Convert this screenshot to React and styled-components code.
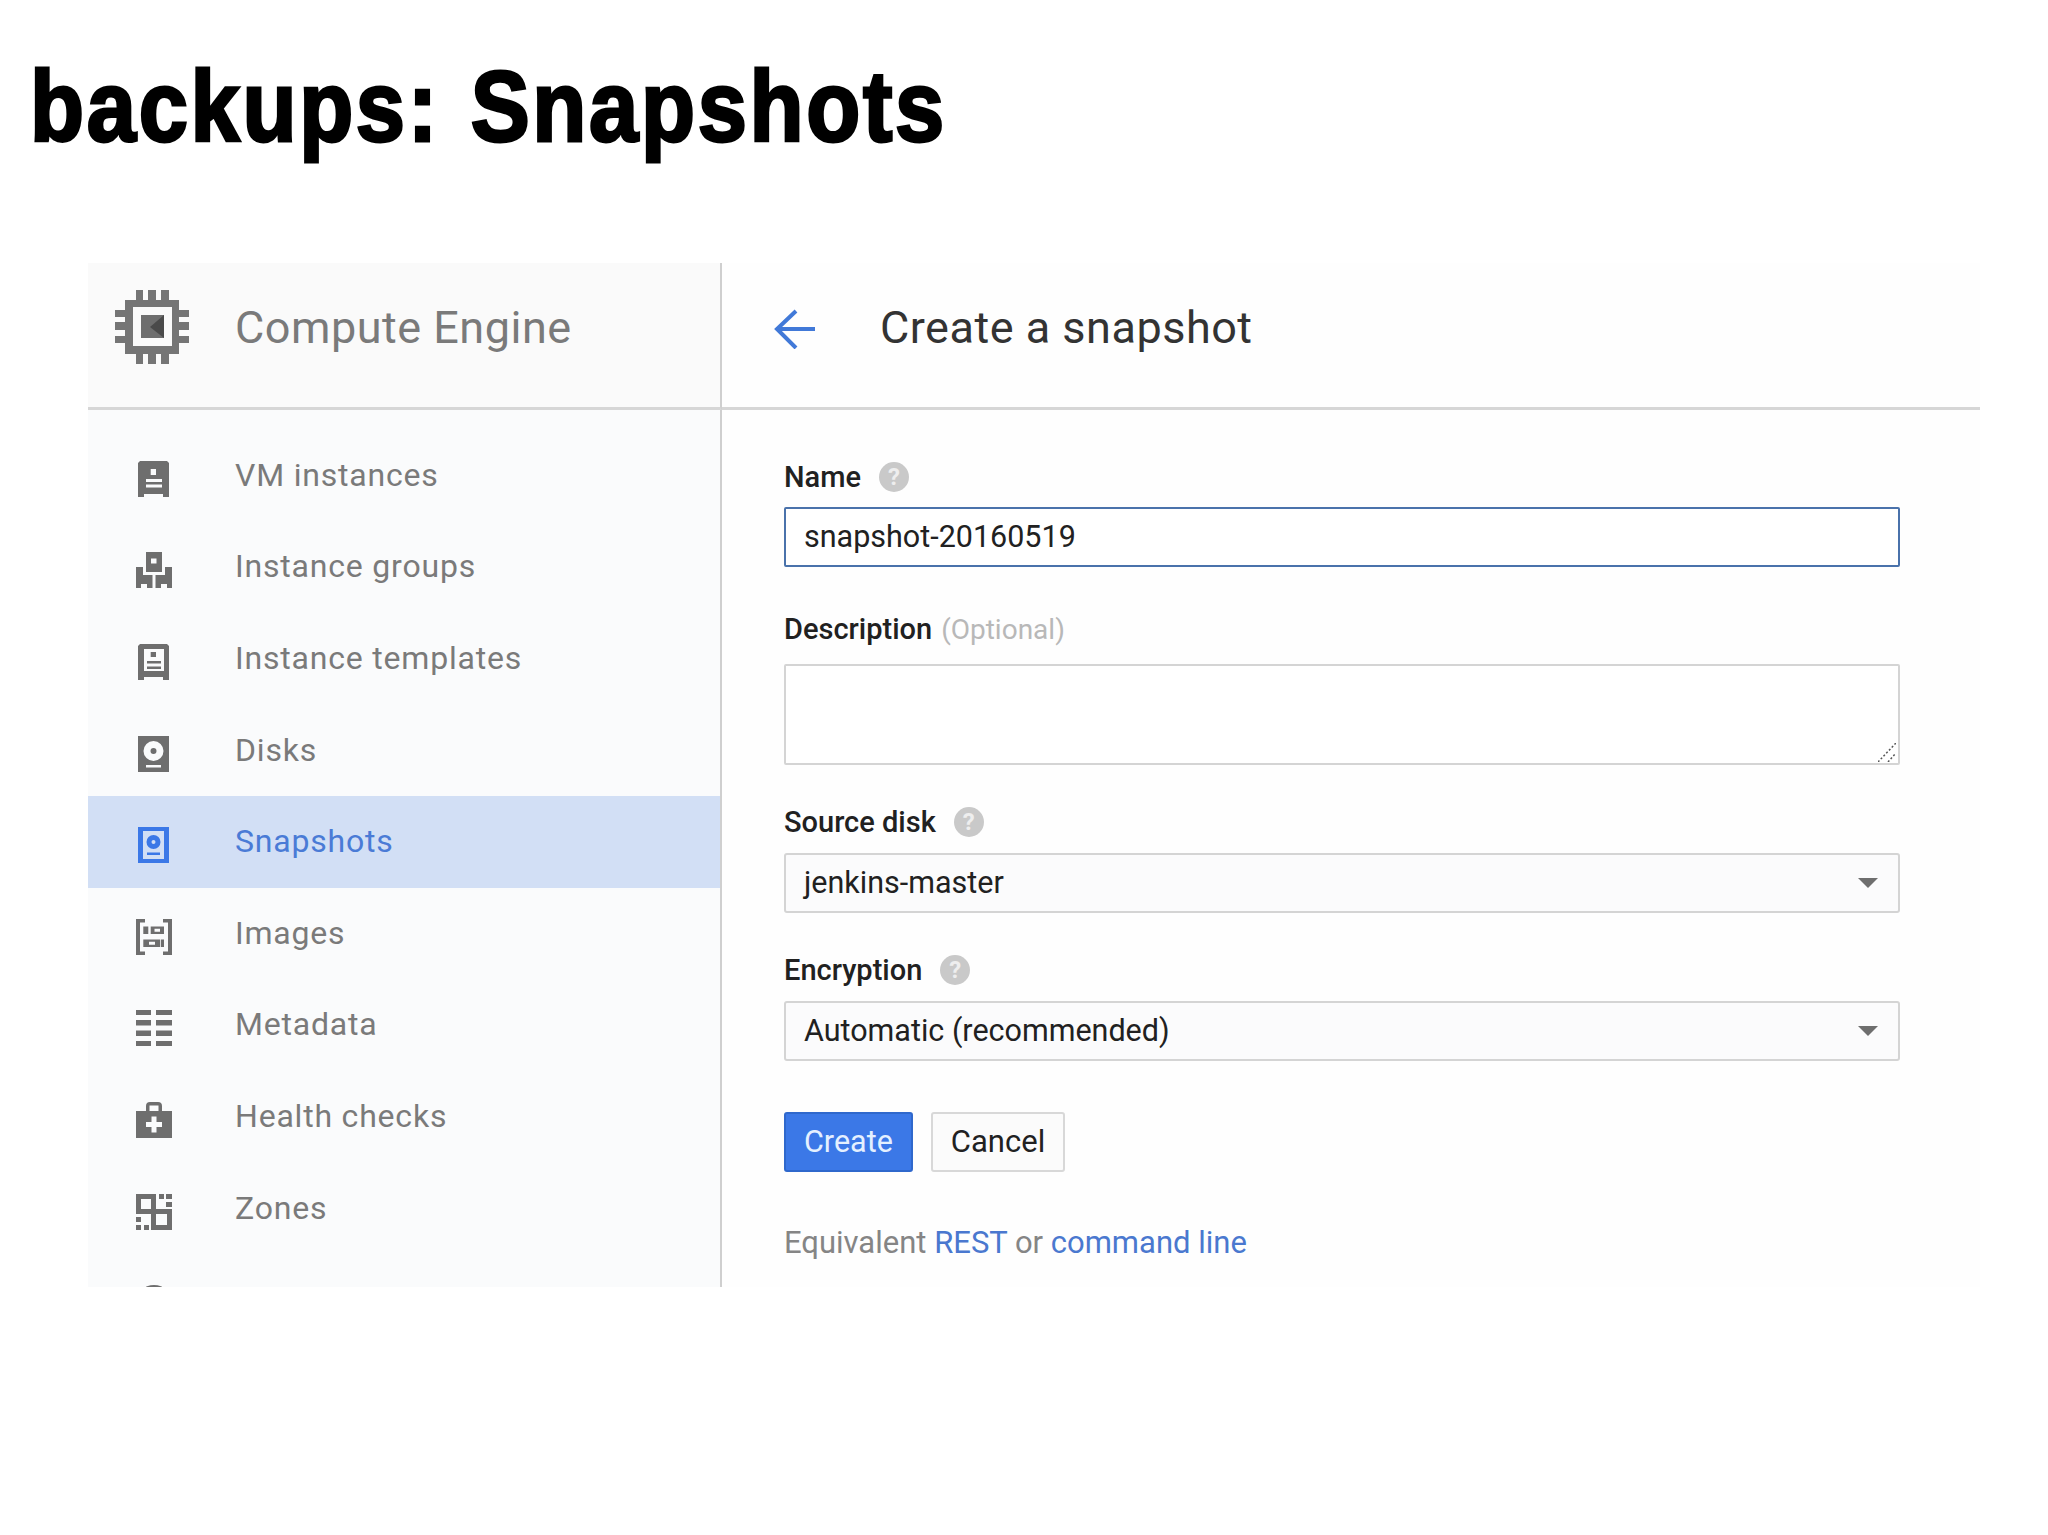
import React from "react";
import styled, { createGlobalStyle } from "styled-components";

const GlobalStyle = createGlobalStyle`
  html, body {
    margin: 0;
    background: #fff;
    font-family: Roboto, "Liberation Sans", sans-serif;
  }
`;

const Page = styled.div`
  width: 2048px;
  height: 1535px;
  overflow: hidden;
`;

const SlideTitle = styled.h1`
  margin: 0;
  height: 263px;
  padding: 46px 0 0 34px;
  box-sizing: border-box;
  font-family: "Liberation Sans", sans-serif;
  font-size: 100px;
  font-weight: 700;
  line-height: 120px;
  letter-spacing: 3px;
  word-spacing: 4px;
  color: #000;
  -webkit-text-stroke: 3px #000;
  transform: scaleX(0.885);
  transform-origin: left top;
  white-space: nowrap;
`;

const Panel = styled.div`
  display: grid;
  grid-template-columns: 634px 1fr;
  grid-template-rows: 147px 1fr;
  width: 1892px;
  height: 1024px;
  margin-left: 88px;
  overflow: hidden;
  background: #fefefe;
`;

const BrandBar = styled.div`
  display: flex;
  align-items: center;
  gap: 46px;
  padding: 0 0 16px 27px;
  background: #fafafa;
  border-right: 2px solid #cfcfcf;
  border-bottom: 3px solid #d6d6d6;
  font-size: 45px;
  letter-spacing: 0.5px;
  color: #7a7a7a;
`;

const PageBar = styled.div`
  display: flex;
  align-items: center;
  gap: 64px;
  padding: 0 0 16px 52px;
  border-bottom: 3px solid #d6d6d6;
  font-size: 45px;
  letter-spacing: 0.5px;
  color: #333;
`;

const Sidebar = styled.nav`
  padding-top: 20px;
  background: #fafbfc;
  border-right: 2px solid #cfcfcf;
  overflow: hidden;
`;

const NavRow = styled.div`
  display: flex;
  align-items: center;
  gap: 63px;
  height: 91.6px;
  padding: 0 0 2px 48px;
  box-sizing: border-box;
  font-size: 32px;
  letter-spacing: 0.8px;
  color: ${(p) => (p.$active ? "#4a7bd6" : "#7a7a7a")};
  background: ${(p) => (p.$active ? "#d2dff5" : "transparent")};
`;

const NavIcon = styled.svg`
  flex: none;
  width: 36px;
  height: 36px;
  margin-top: 8px;
  fill: ${(p) => (p.$active ? "#3b78e7" : "#6e6e6e")};
`;

const Form = styled.form`
  padding: 47px 0 0 62px;
`;

const Field = styled.div`
  width: 1116px;
  margin-bottom: ${(p) => p.$after}px;
`;

const LabelRow = styled.div`
  display: flex;
  align-items: center;
  gap: 18px;
  height: 40px;
  margin-bottom: ${(p) => p.$gap}px;
  font-size: 29px;
  font-weight: 500;
  color: #212121;
`;

const Optional = styled.span`
  margin-left: -9px;
  font-size: 28px;
  font-weight: 400;
  color: #b8b8b8;
`;

const Help = styled.span`
  display: flex;
  align-items: center;
  justify-content: center;
  width: 30px;
  height: 30px;
  border-radius: 50%;
  background: #c9c9c9;
  font-size: 24px;
  font-weight: 700;
  color: #eee;
`;

const TextInput = styled.input`
  display: block;
  width: 100%;
  height: 60px;
  padding: 0 18px 2px;
  box-sizing: border-box;
  border: 2px solid #4a72ab;
  border-radius: 2px;
  outline: none;
  background: #fff;
  font-family: inherit;
  font-size: 30.5px;
  color: #212121;
`;

const AreaWrap = styled.div`
  position: relative;
  height: 101px;
`;

const TextArea = styled.textarea`
  display: block;
  width: 100%;
  height: 100%;
  box-sizing: border-box;
  border: 2px solid #d4d4d4;
  border-radius: 2px;
  outline: none;
  resize: none;
  background: #fff;
`;

const Grip = styled.svg`
  position: absolute;
  right: 4px;
  bottom: 3px;
  width: 18px;
  height: 19px;
`;

const SelectBox = styled.div`
  display: flex;
  align-items: center;
  justify-content: space-between;
  height: 60px;
  padding: 0 20px 2px 18px;
  box-sizing: border-box;
  border: 2px solid #d4d4d4;
  border-radius: 3px;
  background: #fbfbfc;
  font-size: 30.5px;
  color: #212121;
`;

const Caret = styled.span`
  width: 0;
  height: 0;
  margin-top: 2px;
  border-left: 10px solid transparent;
  border-right: 10px solid transparent;
  border-top: 10px solid #6e6e6e;
`;

const Actions = styled.div`
  display: flex;
  gap: 18px;
  margin-bottom: 51px;
`;

const Button = styled.button`
  height: 60px;
  padding: 0 18px 2px;
  border: 2px solid ${(p) => (p.$primary ? "#2f68cc" : "#d8d8d8")};
  border-radius: 3px;
  background: ${(p) => (p.$primary ? "#3b78e7" : "#fbfbfb")};
  font-family: inherit;
  font-size: ${(p) => (p.$primary ? 30.5 : 31)}px;
  color: ${(p) => (p.$primary ? "#e4f0ff" : "#212121")};
`;

const Equivalent = styled.div`
  font-size: 31px;
  line-height: 40px;
  color: #858585;
`;

const DocLink = styled.a`
  color: #4a78cf;
  text-decoration: none;
`;

const ArrowSvg = styled.svg`
  margin-top: 4px;
`;

const ChipIcon = () => (
  <svg width="74" height="74" viewBox="0 0 74 74" fill="#757575">
    <path d="M21 0h7v10h-7zM33 0h8v10h-8zM46 0h8v10h-8zM21 64h7v10h-7zM33 64h8v10h-8zM46 64h8v10h-8zM0 20h10v7H0zM0 32h10v8H0zM0 46h10v7H0zM64 20h10v7H64zM64 32h10v8H64zM64 46h10v7H64z" />
    <path fillRule="evenodd" d="M10 10h54v54H10zM18 17v39h39V17z" />
    <rect x="26" y="25" width="23" height="23" fill="#6e6e6e" />
    <path d="M49 25v23L35 37z" fill="#4a4a4a" />
  </svg>
);

const BackArrow = () => (
  <ArrowSvg width="42" height="40" viewBox="0 0 42 40" fill="none" stroke="#4179d8" strokeWidth="4">
    <path d="M41 20H4M22 2L3 20l19 19" />
  </ArrowSvg>
);

const VmIcon = () => (
  <path
    fillRule="evenodd"
    d="M4 0h27l2 2v34h-6v-3H8v3H2V2zM14.7 8v6H20V8zM10 18v3h16v-3zM10 23.500v3h16v-3z"
  />
);

const GroupIcon = () => (
  <path
    fillRule="evenodd"
    d="M10 0h16v20H10zM15 6.500v5h5.500v-5zM0 15h7v8h9.500v13h-5.500v-4H5v4H0zM36 15h-7v8h-9.500v13h5.500v-4h6v4h5z"
  />
);

const TemplateIcon = () => (
  <path
    fillRule="evenodd"
    d="M4 0h27l2 2v34h-6v-3H8v3H2V2zM8 5v22h20V5zM14.700 8H20v5h-5.300zM11 17h14v2.500H11zM11 22.500h14V25H11z"
  />
);

const DiskIcon = () => (
  <path
    fillRule="evenodd"
    d="M2 0h31v36H2zM17.500 5a10 10 0 1 0 0 20 10 10 0 0 0 0-20zM17.500 12a3 3 0 1 1 0 6 3 3 0 0 1 0-6zM10 29v2.500h15V29z"
  />
);

const SnapshotIcon = () => (
  <path
    fillRule="evenodd"
    d="M2 0h31v36H2zM7 4v28h21V4zM17.500 8a7 7 0 1 1 0 14 7 7 0 0 1 0-14zM17.500 13a2 2 0 1 0 0 4 2 2 0 0 0 0-4zM11 25.500h13V28H11z"
  />
);

const ImageIcon = () => (
  <path
    fillRule="evenodd"
    d="M0 0h9v3.500H4v29h5V36H0zM36 0h-9v3.500h5v29h-5V36h9zM7.300 7.500h5V15h-5zM14.700 7.500H28V15H14.700zM18.500 9.800v3h5.500v-3zM7.300 20.500h17.500V28H7.300zM13 22.800v3h6v-3zM24 20.500h4V28h-4z"
  />
);

const MetaIcon = () => (
  <path d="M0 0h15v5H0zM20 0h16v5H20zM0 10h15v5.500H0zM20 10h16v5.500H20zM0 20.500h15V26H0zM20 20.500h16V26H20zM0 31h15v5H0zM20 31h16v5H20z" />
);

const HealthIcon = () => (
  <path
    fillRule="evenodd"
    d="M14 0h8a4 4 0 0 1 4 4v5h10v27H0V9h10V4a4 4 0 0 1 4-4zM13.500 3.500V9h9V3.500zM15.500 14.500v5.500H10v5h5.500v5.500h5V25H26v-5h-5.500v-5.500z"
  />
);

const ZoneIcon = () => (
  <path
    fillRule="evenodd"
    d="M0 0h20v15h16v21H15V20H0zM5 5v10h10V5zM20 20v11h11V20zM23 0h5v5h-5zM30 0h6v5h-6zM30 8h6v5h-6zM0 23h5v5H0zM0 31h5v5H0zM8 31h5v5H8z"
  />
);

const ClockIcon = () => <circle cx="18" cy="18" r="18" />;

const navItems = [
  { label: "VM instances", glyph: <VmIcon /> },
  { label: "Instance groups", glyph: <GroupIcon /> },
  { label: "Instance templates", glyph: <TemplateIcon /> },
  { label: "Disks", glyph: <DiskIcon /> },
  { label: "Snapshots", glyph: <SnapshotIcon />, active: true },
  { label: "Images", glyph: <ImageIcon /> },
  { label: "Metadata", glyph: <MetaIcon /> },
  { label: "Health checks", glyph: <HealthIcon /> },
  { label: "Zones", glyph: <ZoneIcon /> },
  { label: "", glyph: <ClockIcon /> },
];

const App = () => (
  <Page>
    <GlobalStyle />
    <SlideTitle>backups: Snapshots</SlideTitle>
    <Panel>
      <BrandBar>
        <ChipIcon />
        Compute Engine
      </BrandBar>
      <PageBar>
        <BackArrow />
        Create a snapshot
      </PageBar>
      <Sidebar>
        {navItems.map(({ label, glyph, active }, index) => (
          <NavRow $active={active} key={index}>
            <NavIcon $active={active} viewBox="0 0 36 36">
              {glyph}
            </NavIcon>
            {label}
          </NavRow>
        ))}
      </Sidebar>
      <Form>
        <Field $after={42}>
          <LabelRow $gap={10}>
            Name <Help>?</Help>
          </LabelRow>
          <TextInput defaultValue="snapshot-20160519" />
        </Field>
        <Field $after={37}>
          <LabelRow $gap={15}>
            Description <Optional>(Optional)</Optional>
          </LabelRow>
          <AreaWrap>
            <TextArea />
            <Grip viewBox="0 0 18 19" fill="none" stroke="#555" strokeWidth="1.500" strokeDasharray="2 2">
              <path d="M0 19L18 0M10 19L18 10" />
            </Grip>
          </AreaWrap>
        </Field>
        <Field $after={37}>
          <LabelRow $gap={11}>
            Source disk <Help>?</Help>
          </LabelRow>
          <SelectBox>
            jenkins-master
            <Caret />
          </SelectBox>
        </Field>
        <Field $after={51}>
          <LabelRow $gap={11}>
            Encryption <Help>?</Help>
          </LabelRow>
          <SelectBox>
            Automatic (recommended)
            <Caret />
          </SelectBox>
        </Field>
        <Actions>
          <Button type="button" $primary>
            Create
          </Button>
          <Button type="button">Cancel</Button>
        </Actions>
        <Equivalent>
          Equivalent <DocLink>REST</DocLink> or <DocLink>command line</DocLink>
        </Equivalent>
      </Form>
    </Panel>
  </Page>
);

export default App;
